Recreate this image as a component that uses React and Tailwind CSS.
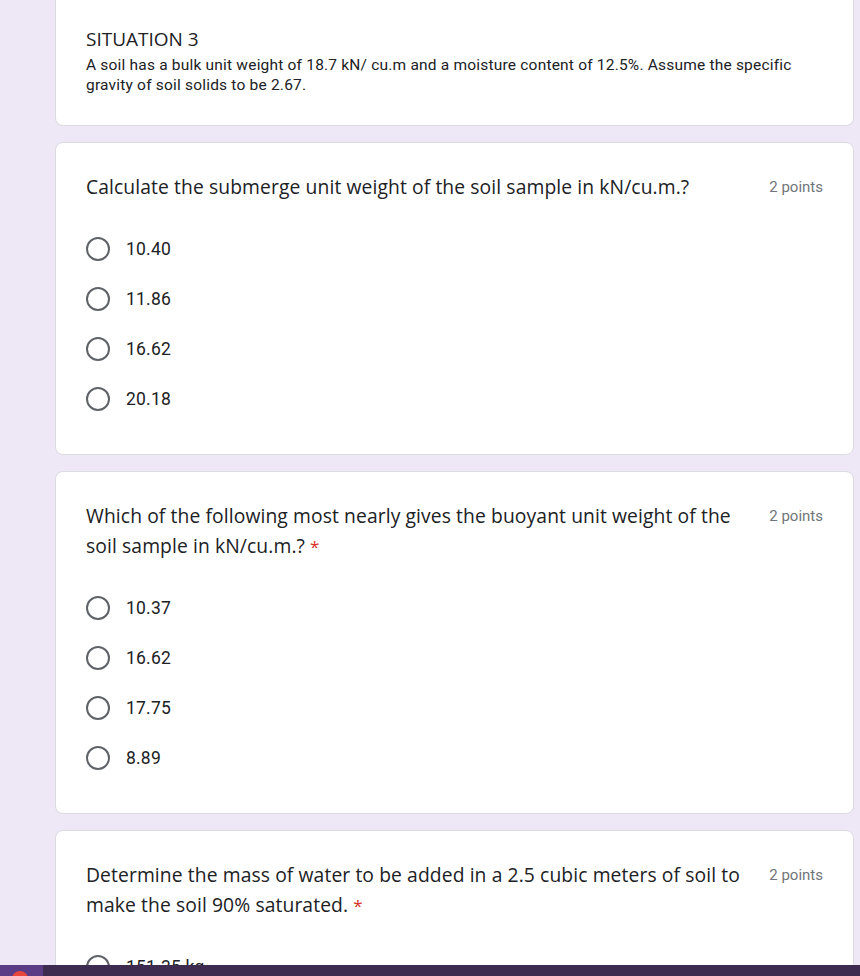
import React from 'react';

const questions = [
  {
    id: 'q1',
    title: 'Calculate the submerge unit weight of the soil sample in kN/cu.m.?',
    required: false,
    options: ['10.40', '11.86', '16.62', '20.18'],
  },
  {
    id: 'q2',
    title: 'Which of the following most nearly gives the buoyant unit weight of the soil sample in kN/cu.m.?',
    required: true,
    options: ['10.37', '16.62', '17.75', '8.89'],
  },
  {
    id: 'q3',
    title: 'Determine the mass of water to be added in a 2.5 cubic meters of soil to make the soil 90% saturated.',
    required: true,
    options: ['151.35 kg', '215.48 kg', '312.50 kg', '98.20 kg'],
  },
];

function Radio({ label }) {
  return (
    <div className="flex items-center h-[50px] gap-4">
      <span className="w-6 h-6 rounded-full border-2 border-[#5f6368] shrink-0" />
      <span className="text-[17.5px] text-[#202124] font-['Roboto',sans-serif] tracking-[0.2px]">{label}</span>
    </div>
  );
}

function Question({ q }) {
  return (
    <div className="bg-white border border-[#dadce0] rounded-lg px-[30px] pt-[29px] pb-[30px]">
      <div className="flex items-start justify-between gap-6">
        <div className="text-[19.3px] leading-[30px] text-[#202124] font-['Open_Sans',sans-serif] tracking-[0.1px]">
          {q.title}
          {q.required && <span className="ml-[5px] text-[17px] leading-none text-[#d93025]">*</span>}
        </div>
        <div className="shrink-0 text-[15px] leading-[30px] text-[#70757a] font-['Roboto',sans-serif]">2 points</div>
      </div>
      <div className="mt-[22px]">
        {q.options.map(o => (
          <Radio key={o} label={o} />
        ))}
      </div>
    </div>
  );
}

export default function App() {
  return (
    <div className="min-h-screen bg-[#ede7f6] pl-[55px] pr-[6px]">
      <div className="flex flex-col gap-4">
        {/* Section header */}
        <div className="bg-white border-x border-b border-[#dadce0] rounded-b-lg px-[30px] pt-[25px] pb-[30px]">
          <h1 className="text-[19px] leading-[28px] text-[#202124] font-['Open_Sans',sans-serif]">SITUATION 3</h1>
          <p className="mt-[2px] text-[15.5px] leading-[20px] text-[#202124] font-['Roboto',sans-serif] tracking-[0.2px]">
            A soil has a bulk unit weight of 18.7 kN/ cu.m and a moisture content of 12.5%. Assume the specific gravity of soil solids to be 2.67.
          </p>
        </div>

        {questions.map(q => (
          <Question key={q.id} q={q} />
        ))}
      </div>

      {/* bottom strip */}
      <div className="fixed bottom-0 left-0 right-0 h-[11px] flex bg-[#3d2c4f]">
        <div className="w-[43px] h-full bg-[#5b3b86] relative overflow-hidden">
          <span className="absolute left-[12px] top-[6px] w-4 h-4 rounded-full bg-[#e8453c]" />
        </div>
      </div>
    </div>
  );
}
